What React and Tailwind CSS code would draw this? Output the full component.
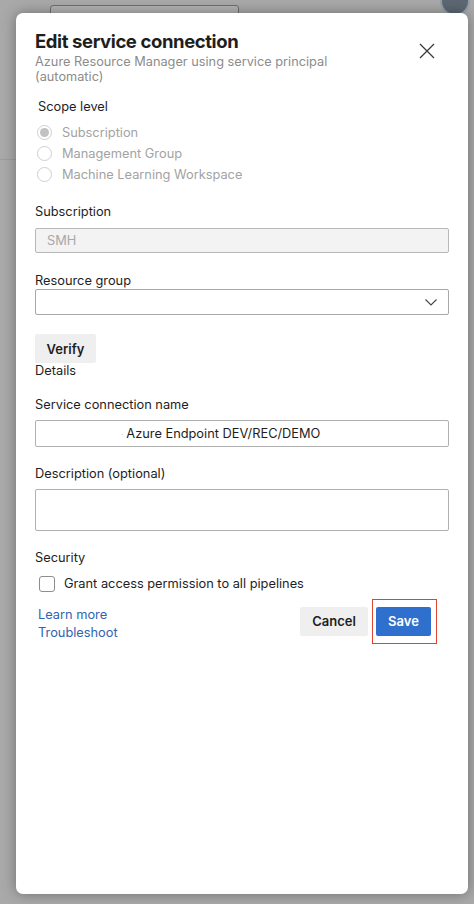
import React from "react";

function Radio({ checked, label }) {
  return (
    <div className="flex items-center h-[21px]">
      <div className="ml-[2px] w-[15px] h-[15px] rounded-full border border-[#cfcfcf] bg-white flex items-center justify-center">
        {checked && <div className="w-[9px] h-[9px] rounded-full bg-[#c2c2c2]" />}
      </div>
      <span className="ml-[10px] text-[12.8px] text-[#a3a3a3] leading-[18px]">{label}</span>
    </div>
  );
}

export default function App() {
  return (
    <div
      className="relative w-[474px] h-[904px] overflow-hidden bg-[#a9a9a9] pt-[13px] pl-[16px]"
      style={{ fontFamily: "Inter, 'Liberation Sans', Arial, sans-serif" }}
    >
      {/* background page elements under the overlay */}
      <div className="absolute left-0 top-[159px] w-[20px] h-px bg-[#9c9c9c]" />
      <div className="absolute left-[50px] top-[5px] w-[189px] h-[20px] rounded-[3px] border border-[#6f6f6f] bg-[#b3b3b3]" />
      <div className="absolute left-[440px] top-[-14px] w-[30px] h-[30px] rounded-full bg-[#5d6873] border-2 border-[#8fa0ad]" />

      {/* dialog */}
      <div className="relative w-[452px] h-[881px] bg-white rounded-[7px] shadow-[0_0_14px_rgba(0,0,0,0.35)] px-[19px] pt-[16px] text-[#1e1e1e]">
        <button className="absolute left-[396px] top-[23px] w-[30px] h-[30px] flex items-center justify-center">
          <svg width="16" height="16" viewBox="0 0 16 16" fill="none" stroke="#3a3a3a" strokeWidth="1.3">
            <path d="M1 1 L15 15 M15 1 L1 15" />
          </svg>
        </button>

        <div className="text-[18.5px] font-bold leading-[25px] tracking-[-0.4px]">Edit service connection</div>
        <div className="w-[310px] text-[12.75px] leading-[15px] text-[#8c8c8c]">
          Azure Resource Manager using service principal (automatic)
        </div>

        <div className="mt-[14px] pl-[3px] text-[12.8px] leading-[18px]">Scope level</div>
        <div className="mt-[6px] flex flex-col">
          <Radio checked label="Subscription" />
          <Radio label="Management Group" />
          <Radio label="Machine Learning Workspace" />
        </div>

        <div className="mt-[18px] text-[12.8px] leading-[18px]">Subscription</div>
        <div className="mt-[7px] h-[25px] rounded-[2px] border border-[#b8b8b8] bg-[#f3f3f3] flex items-center pl-[11px] text-[12.8px] text-[#a8a8a8]">
          SMH
        </div>

        <div className="mt-[19px] text-[12.8px] leading-[17px]">Resource group</div>
        <div className="h-[26px] rounded-[2px] border border-[#a8a8a8] bg-white flex items-center justify-end pr-[11px]">
          <svg width="12" height="7" viewBox="0 0 12 7" fill="none" stroke="#444" strokeWidth="1.1">
            <path d="M0.5 0.5 L6 6 L11.5 0.5" />
          </svg>
        </div>

        <button className="mt-[19px] w-[61px] h-[29px] bg-[#efefef] rounded-[2px] text-[13px] font-semibold flex items-center justify-center pt-[2px]">
          Verify
        </button>
        <div className="text-[12.8px] leading-[16px]">Details</div>

        <div className="mt-[17px] text-[12.8px] leading-[18px]">Service connection name</div>
        <div className="mt-[6px] h-[27px] rounded-[2px] border border-[#b0b0b0] bg-white flex items-center pl-[85px] text-[12.8px]">
          <span className="text-[#bdbdbd] text-[8px] mr-[3px]">·</span>Azure Endpoint DEV/REC/DEMO
        </div>

        <div className="mt-[18px] text-[12.8px] leading-[18px]">Description (optional)</div>
        <div className="mt-[6px] h-[42px] rounded-[2px] border border-[#b0b0b0] bg-white" />

        <div className="mt-[18px] text-[12.8px] leading-[18px]">Security</div>
        <div className="mt-[7px] h-[20px] flex items-center">
          <div className="ml-[4px] w-[16px] h-[16px] rounded-[3px] border border-[#8e8e8e] bg-white" />
          <span className="ml-[9px] text-[12.8px] leading-[18px]">Grant access permission to all pipelines</span>
        </div>

        <div className="mt-[5px] flex items-start justify-between pr-[12px]">
          <div className="pl-[3px] pt-[7px] flex flex-col text-[12.8px] leading-[18px] text-[#2f64b0]">
            <span>Learn more</span>
            <span>Troubleshoot</span>
          </div>
          <div className="flex items-center">
            <button className="w-[68px] h-[29px] bg-[#efefef] rounded-[2px] text-[13px] font-semibold">Cancel</button>
            <div className="ml-[4px] pl-[3px] pr-[5px] py-[7px] border-[1.5px] border-[#e0442f]">
              <button className="w-[55px] h-[29px] bg-[#2f6fcd] rounded-[2px] text-[13px] font-semibold text-white">Save</button>
            </div>
          </div>
        </div>
      </div>
    </div>
  );
}
